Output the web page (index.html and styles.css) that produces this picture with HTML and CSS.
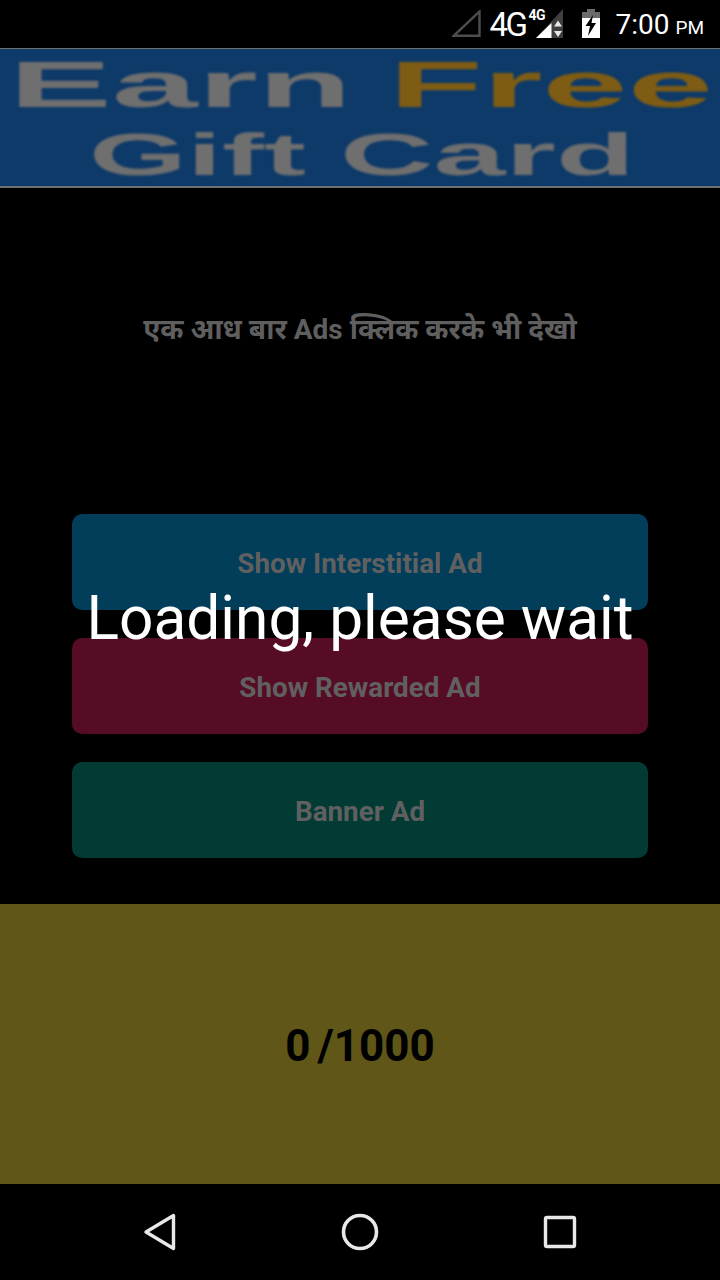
FILE: index.html
```html
<!DOCTYPE html>
<html lang="hi">
<head>
<meta charset="utf-8">
<title>Earn Free Gift Card</title>
<link rel="stylesheet" href="styles.css">
</head>
<body>
<div class="screen">
  <header class="status">
    <svg class="ic-signal" viewBox="0 0 29 27"><path d="M27.500 1.500V25.800H1.800Z" fill="none" stroke="#4d4d4d" stroke-width="2.400"/></svg>
    <span class="net">4G</span>
    <span class="net-wrap">
      <span class="net-small">4G</span>
      <svg class="ic-signal2" viewBox="0 0 27 29"><path d="M27 0V29H0Z" fill="#3f3f3f"/><path d="M15.500 14V29H0Z" fill="#fff"/><path d="M22 11.500l4 6h-8zM22 28l-4-6h8z" fill="#e8e8e8"/></svg>
    </span>
    <svg class="ic-batt" viewBox="0 0 18 29"><path d="M5 0h8v3h5v6H0V3h5z" fill="#6a6a6a"/><path d="M0 9h18v20H0z" fill="#fff"/><path d="M11 6L3.500 17H8l-2 10 8-13H9.500z" fill="#000"/></svg>
    <span class="clock">7:00</span>
    <span class="ampm">PM</span>
  </header>

  <div class="banner">
    <svg class="banner-art" viewBox="0 0 720 138" preserveAspectRatio="none">
      <text class="b-text" x="9" y="58" textLength="343" lengthAdjust="spacingAndGlyphs">Earn</text>
      <text class="b-text b-free" x="389" y="58" textLength="324" lengthAdjust="spacingAndGlyphs">Free</text>
      <text class="b-text b-small" x="89" y="127" textLength="217" lengthAdjust="spacingAndGlyphs">Gift</text>
      <text class="b-text b-small" x="340" y="127" textLength="295" lengthAdjust="spacingAndGlyphs">Card</text>
    </svg>
  </div>

  <main class="content">
    <p class="hint">एक आध बार Ads क्लिक करके भी देखो</p>
    <div class="actions">
      <button class="btn btn-blue">Show Interstitial Ad</button>
      <button class="btn btn-red">Show Rewarded Ad</button>
      <button class="btn btn-green">Banner Ad</button>
    </div>
  </main>

  <section class="score">0 /1000</section>

  <nav class="navbar">
    <svg class="nav-ic" viewBox="0 0 40 40"><path d="M33.500 3.500V36.500L6 20Z" fill="none" stroke="#e8e8e8" stroke-width="3.400" stroke-linejoin="round"/></svg>
    <svg class="nav-ic" viewBox="0 0 40 40"><circle cx="20" cy="20" r="16.500" fill="none" stroke="#e8e8e8" stroke-width="3.600"/></svg>
    <svg class="nav-ic" viewBox="0 0 40 40"><rect x="5.500" y="5.500" width="29" height="29" rx="1.500" fill="none" stroke="#e8e8e8" stroke-width="3.400"/></svg>
  </nav>

  <div class="loading">Loading, please wait</div>
</div>
</body>
</html>
```

FILE: styles.css
```css
* { box-sizing: border-box; }
html, body { margin: 0; padding: 0; background: #000; }
.screen {
  position: relative;
  width: 720px;
  height: 1280px;
  display: flex;
  flex-direction: column;
  background: #000;
  font-family: Roboto, "Noto Sans", "Noto Sans Devanagari", sans-serif;
  overflow: hidden;
}
.status {
  height: 48px;
  flex: none;
  display: flex;
  align-items: center;
  justify-content: flex-end;
  padding-right: 16px;
  color: #fff;
  font-family: Roboto, sans-serif;
}
.ic-signal { width: 29px; height: 27px; margin-right: 8px; margin-top: -1px; }
.net { font-size: 33px; letter-spacing: -2.500px; margin-right: 11px; margin-top: 1px; }
.net-wrap { position: relative; width: 27px; height: 29px; margin-right: 19px; margin-top: -1px; }
.net-small { position: absolute; left: -8px; top: -1px; font-size: 14px; line-height: 14px; font-weight: 700; letter-spacing: -.5px; z-index: 1; }
.ic-signal2 { width: 27px; height: 29px; display: block; }
.ic-batt { width: 18px; height: 29px; margin-right: 15px; margin-top: -1px; }
.clock { font-size: 28px; line-height: 1; margin-top: 1px; margin-right: 6px; }
.ampm { font-size: 19px; line-height: 1; margin-top: 6px; }

.banner {
  height: 140px;
  flex: none;
  background: #0e3a69;
  border-top: 1px solid #707070;
  border-bottom: 2px solid #707070;
}
.banner-art { display: block; width: 100%; height: 100%; overflow: visible; filter: blur(1.200px); }
.b-text { font-family: "Liberation Sans", Arial, sans-serif; font-weight: 700; font-size: 66px; fill: #6f6f6f; }
.b-free { fill: #7f5c14; }
.b-small { font-size: 60px; }

.content { flex: 1; display: flex; flex-direction: column; }
.hint {
  margin: 126px 0 0;
  height: 32px;
  text-align: center;
  font-size: 28px;
  line-height: 32px;
  font-weight: 700;
  color: #5f5f5f;
}
.actions {
  margin: 168px 72px 0;
  display: flex;
  flex-direction: column;
  gap: 28px;
}
.btn {
  height: 96px;
  border: 0;
  border-radius: 10px;
  padding: 3px 0 0;
  font-family: Roboto, sans-serif;
  font-size: 27.800px;
  font-weight: 700;
  color: #606060;
}
.btn-blue { background: #023d59; }
.btn-red { background: #570c26; }
.btn-green { background: #023a34; }

.score {
  height: 280px;
  flex: none;
  display: flex;
  align-items: center;
  justify-content: center;
  padding-top: 4px;
  background: #5f5617;
  color: #000;
  font-size: 44px;
  font-weight: 700;
  word-spacing: -4px;
}

.navbar {
  height: 96px;
  flex: none;
  display: flex;
  align-items: center;
  justify-content: space-between;
  padding: 0 140px;
  background: #000;
}
.nav-ic { width: 40px; height: 40px; display: block; }

.loading {
  position: absolute;
  left: 0;
  right: 0;
  top: 583px;
  text-align: center;
  color: #fff;
  font-size: 60.400px;
  line-height: 72px;
}
```
